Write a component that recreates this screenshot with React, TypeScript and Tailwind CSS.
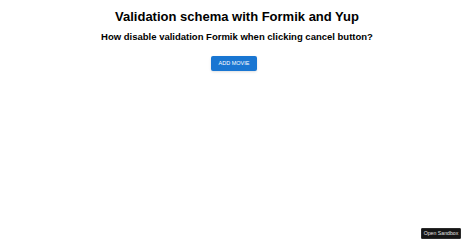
export default function App() {
  return (
    <div className="relative h-[248px] w-[474px] bg-white font-['Liberation_Sans',Arial,sans-serif] text-black">
      <div className="flex flex-col items-center pt-[9px]">
        <h1 className="text-[13px] font-bold leading-[15px]">Validation schema with Formik and Yup</h1>
        <h2 className="mt-[7px] text-[9.5px] font-bold leading-[11px]">
          How disable validation Formik when clicking cancel button?
        </h2>
        <button className="mr-[6px] mt-[14px] h-[15px] w-[46px] rounded-[2px] bg-[#1976d2] text-[5.5px] font-medium uppercase leading-[15px] text-white shadow-sm">
          Add Movie
        </button>
      </div>
      <button className="absolute left-[421px] top-[228px] h-[11px] w-[40px] rounded-[1px] border border-[#2a2a2a] bg-[#151515] text-[5.2px] leading-[9px] text-[#e5e5e5]">
        Open Sandbox
      </button>
    </div>
  );
}
